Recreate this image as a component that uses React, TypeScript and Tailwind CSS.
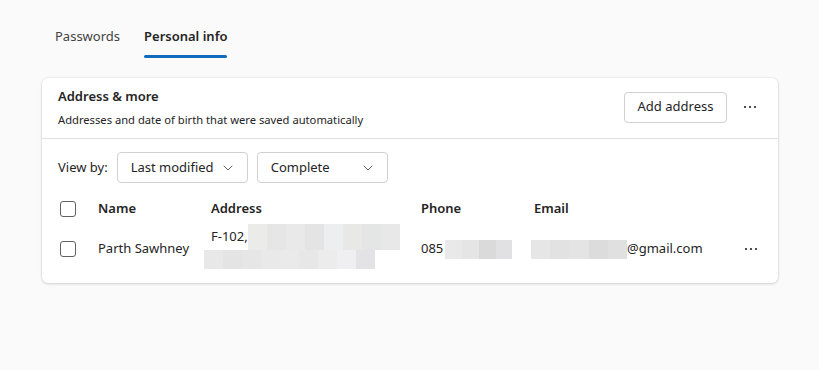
import React from 'react';

const font = "font-['Segoe_UI','Noto_Sans',sans-serif]";

function Dots() {
  return (
    <svg width="14" height="4" viewBox="0 0 14 4" className="text-[#242424]">
      <circle cx="2" cy="2" r="1.1" fill="currentColor" />
      <circle cx="7" cy="2" r="1.1" fill="currentColor" />
      <circle cx="12" cy="2" r="1.1" fill="currentColor" />
    </svg>
  );
}

function Chevron() {
  return (
    <svg width="10" height="6" viewBox="0 0 10 6" fill="none">
      <path d="M1 1l4 4 4-4" stroke="#616161" strokeWidth="1" strokeLinecap="round" strokeLinejoin="round" />
    </svg>
  );
}

function Checkbox() {
  return <div className="w-4 h-4 rounded-[3px] border border-[#616161] bg-white" />;
}

function Mosaic({ shades, h }: { shades: string[]; h: string }) {
  return (
    <div className={`flex ${h}`}>
      {shades.map((c, i) => (
        <div key={i} className="w-[19px] h-full" style={{ backgroundColor: c }} />
      ))}
    </div>
  );
}

export default function App() {
  return (
    <div className={`min-h-[370px] w-[819px] bg-[#fafafa] text-[#242424] ${font}`}>
      {/* Tabs */}
      <div className="flex gap-[24px] pl-[55px] pt-[26px]">
        <div className="flex flex-col items-center">
          <span className="text-[13px] leading-5 text-[#424242]">Passwords</span>
        </div>
        <div className="flex flex-col">
          <span className="text-[13px] leading-5 font-semibold">Personal info</span>
          <div className="mt-[9px] h-[3px] rounded-full bg-[#0f6cbd]" />
        </div>
      </div>

      {/* Card */}
      <div className="ml-[42px] mt-[20px] w-[736px] rounded-[6px] bg-white shadow-[0_0_2px_rgba(0,0,0,0.12),0_1px_3px_rgba(0,0,0,0.14)]">
        <div className="flex items-center justify-between border-b border-[#e0e0e0] pl-4 pr-3 pt-[8px] pb-[10px]">
          <div className="flex flex-col gap-[6px]">
            <span className="text-[13px] leading-5 font-semibold">Address &amp; more</span>
            <span className="text-[11.2px] leading-4">Addresses and date of birth that were saved automatically</span>
          </div>
          <div className="flex items-center gap-[7px]">
            <button className="h-[31px] w-[103px] rounded-[4px] border border-[#d1d1d1] bg-white text-[13px]">
              Add address
            </button>
            <div className="flex h-8 w-8 items-center justify-center">
              <Dots />
            </div>
          </div>
        </div>

        <div className="px-4 pt-[13px] pb-[9px]">
          <div className="flex items-center gap-[9px]">
            <span className="text-[13px]">View by:</span>
            <div className="flex h-[31px] w-[131px] items-center justify-between rounded-[4px] border border-[#d1d1d1] pl-[13px] pr-[14px]">
              <span className="text-[13px]">Last modified</span>
              <Chevron />
            </div>
            <div className="flex h-[31px] w-[131px] items-center justify-between rounded-[4px] border border-[#d1d1d1] pl-[13px] pr-[14px]">
              <span className="text-[13px]">Complete</span>
              <Chevron />
            </div>
          </div>

          <div className="mt-[10px] grid grid-cols-[40px_113px_210px_113px_210px_1fr] items-center">
            <div className="flex h-[31px] items-center pl-[2px]"><Checkbox /></div>
            <span className="text-[13px] font-semibold">Name</span>
            <span className="text-[13px] font-semibold">Address</span>
            <span className="text-[13px] font-semibold">Phone</span>
            <span className="text-[13px] font-semibold">Email</span>
            <div />

            <div className="flex items-center pl-[2px]"><Checkbox /></div>
            <span className="text-[13px]">Parth Sawhney</span>
            <div className="flex flex-col pb-[5px]">
              <div className="flex h-[26px] items-center">
                <span className="text-[13px]">F-102,</span>
                <Mosaic h="h-[26px]" shades={['#ebebea', '#e6e6e6', '#e9e9e9', '#e4e4e4', '#eceef0', '#e8e8e6', '#e4e5e5', '#e8e8e8']} />
              </div>
              <div className="-ml-[7px]">
                <Mosaic h="h-[19px]" shades={['#e8e8e8', '#e4e4e4', '#e6e6e6', '#e9e9e9', '#eaeaea', '#e7e7e7', '#ececec', '#efeff1', '#e3e3e5']} />
              </div>
            </div>
            <div className="flex items-center">
              <span className="text-[13px]">085</span>
              <div className="flex h-[19px] w-[67px] ml-[2px]">
                <div className="flex-1 bg-[#e9e9e9]" />
                <div className="flex-1 bg-[#e5e5e5]" />
                <div className="flex-1 bg-[#dadada]" />
                <div className="flex-1 bg-[#e1e1e3]" />
              </div>
            </div>
            <div className="flex items-center">
              <div className="flex h-[19px] w-[96px] -ml-[3px]">
                <div className="flex-1 bg-[#e6e6e6]" />
                <div className="flex-1 bg-[#e2e2e2]" />
                <div className="flex-1 bg-[#e4e4e4]" />
                <div className="flex-1 bg-[#dcdcdc]" />
                <div className="flex-1 bg-[#e0e0e0]" />
              </div>
              <span className="text-[13px]">@gmail.com</span>
            </div>
            <div className="flex items-center">
              <Dots />
            </div>
          </div>
        </div>
      </div>
    </div>
  );
}
